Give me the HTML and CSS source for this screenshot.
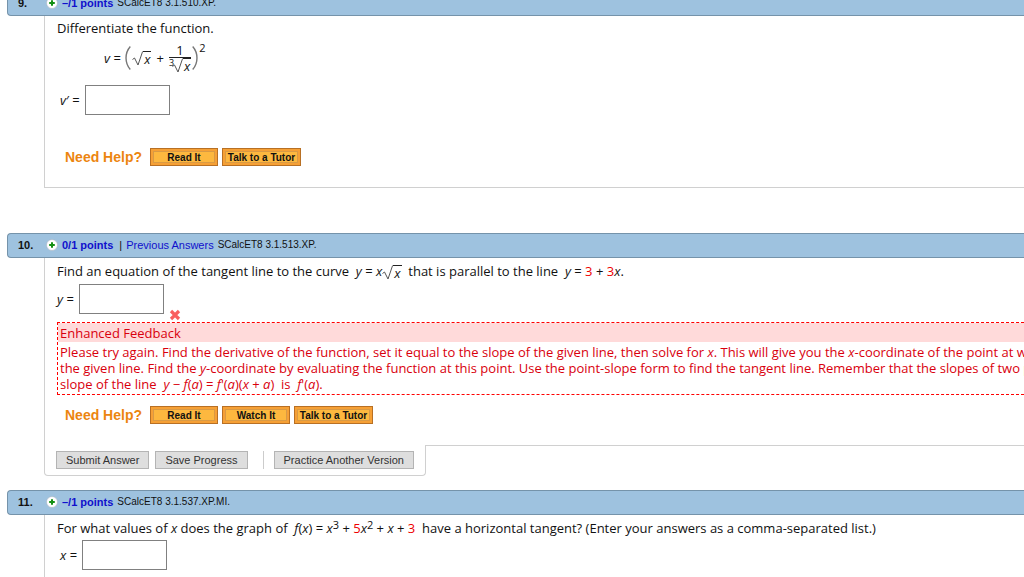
FILE: index.html
```html
<!DOCTYPE html>
<html lang="en">

<head>
    <meta charset="UTF-8">
    <meta name="viewport" content="width=device-width, initial-scale=1.0">
    <title>Homework 3.1</title>
    <link rel="stylesheet" href="styles.css">
</head>

<body>
    <main class="assignment">

        <section class="question first">
            <div class="bar">
                <span class="number">9.</span>
                <svg class="plus" viewBox="0 0 12 12"><circle cx="6" cy="6" r="5.5" fill="#fff" stroke="#a9b6c2" stroke-width="0.6"/><path d="M6 3.2v5.6M3.2 6h5.6" stroke="#149014" stroke-width="2"/></svg>
                <a href="#" class="points">–/1 points</a>
                <span class="source">SCalcET8 3.1.510.XP.</span>
            </div>
            <div class="content">
                <p>Differentiate the function.</p>
                <div class="equation">
                    <i>v</i>&nbsp;=&nbsp;
                    <svg class="paren" viewBox="0 0 6 24"><path d="M5.3 0.5C-0.4 7-0.4 17 5.3 23.5" fill="none" stroke="#777" stroke-width="1.4"/></svg>
                    <span class="root"><svg class="radical" viewBox="0 0 11 15"><path d="M0.5 8.5l2-1.5L6 14 10.6 0.5" fill="none" stroke="#555"/></svg><i>x</i></span>
                    <span class="op">+</span>
                    <span class="fraction">
                        <span class="top">1</span>
                        <span class="root cube"><small>3</small><svg class="radical" viewBox="0 0 11 15"><path d="M0.5 8.5l2-1.5L6 14 10.6 0.5" fill="none" stroke="#555"/></svg><i>x</i></span>
                    </span>
                    <svg class="paren" viewBox="0 0 6 24"><path d="M0.7 0.5C6.4 7 6.4 17 0.7 23.5" fill="none" stroke="#777" stroke-width="1.4"/></svg>
                    <span class="power">2</span>
                </div>
                <div class="answer indent">
                    <label for="q9"><i>v</i>′ =</label>
                    <input type="text" id="q9">
                </div>
                <div class="help">
                    <span class="help-title">Need Help?</span>
                    <button class="help-btn">Read It</button>
                    <button class="help-btn wide">Talk to a Tutor</button>
                </div>
            </div>
        </section>

        <section class="question">
            <div class="bar">
                <span class="number">10.</span>
                <svg class="plus" viewBox="0 0 12 12"><circle cx="6" cy="6" r="5.5" fill="#fff" stroke="#a9b6c2" stroke-width="0.6"/><path d="M6 3.2v5.6M3.2 6h5.6" stroke="#149014" stroke-width="2"/></svg>
                <a href="#" class="points">0/1 points</a>
                <span class="divider">|</span>
                <a href="#" class="previous">Previous Answers</a>
                <span class="source">SCalcET8 3.1.513.XP.</span>
            </div>
            <div class="content">
                <p>Find an equation of the tangent line to the curve &nbsp;<i>y</i> = <i>x</i><span class="root"><svg class="radical" viewBox="0 0 11 15"><path d="M0.5 8.5l2-1.5L6 14 10.6 0.5" fill="none" stroke="#555"/></svg><i>x</i></span>&nbsp; that is parallel to the line &nbsp;<i>y</i> = <b>3</b> + <b>3</b><i>x</i>.</p>
                <div class="answer">
                    <label for="q10"><i>y</i> =</label>
                    <input type="text" id="q10">
                    <svg class="wrong" viewBox="0 0 12 12"><path d="M2 2l8 8M10 2l-8 8" stroke="#f95f5f" stroke-width="3.2"/></svg>
                </div>
                <div class="feedback">
                    <div class="feedback-title">Enhanced Feedback</div>
                    <div class="feedback-text">
                        Please try again. Find the derivative of the function, set it equal to the slope of the given line, then solve for <i>x</i>. This will give you the <i>x</i>-coordinate of the point at which<br>
                        the given line. Find the <i>y</i>-coordinate by evaluating the function at this point. Use the point-slope form to find the tangent line. Remember that the slopes of two parallel<br>
                        slope of the line &nbsp;<i>y</i> − <i>f</i>(<i>a</i>) = <i>f</i>'(<i>a</i>)(<i>x</i> + <i>a</i>)&nbsp; is &nbsp;<i>f</i>'(<i>a</i>).
                    </div>
                </div>
                <div class="help">
                    <span class="help-title">Need Help?</span>
                    <button class="help-btn">Read It</button>
                    <button class="help-btn">Watch It</button>
                    <button class="help-btn wide">Talk to a Tutor</button>
                </div>
            </div>
            <div class="actions">
                <div class="tab">
                    <button>Submit Answer</button>
                    <button>Save Progress</button>
                    <span class="separator"></span>
                    <button>Practice Another Version</button>
                </div>
                <div class="edge"></div>
            </div>
        </section>

        <section class="question last">
            <div class="bar">
                <span class="number">11.</span>
                <svg class="plus" viewBox="0 0 12 12"><circle cx="6" cy="6" r="5.5" fill="#fff" stroke="#a9b6c2" stroke-width="0.6"/><path d="M6 3.2v5.6M3.2 6h5.6" stroke="#149014" stroke-width="2"/></svg>
                <a href="#" class="points">–/1 points</a>
                <span class="source">SCalcET8 3.1.537.XP.MI.</span>
            </div>
            <div class="content">
                <p>For what values of <i>x</i> does the graph of &nbsp;<i>f</i>(<i>x</i>) = <i>x</i><sup>3</sup> + <b>5</b><i>x</i><sup>2</sup> + <i>x</i> + <b>3</b>&nbsp; have a horizontal tangent? (Enter your answers as a comma-separated list.)</p>
                <div class="answer indent">
                    <label for="q11"><i>x</i> =</label>
                    <input type="text" id="q11">
                </div>
            </div>
        </section>

    </main>
</body>

</html>
```
FILE: styles.css
```css
* {
    box-sizing: border-box;
    margin: 0;
    padding: 0;
}

body {
    background-color: #fff;
    color: #111;
    font-family: "Open Sans", Verdana, sans-serif;
    font-size: 13px;
    line-height: 16px;
    overflow: hidden;
}

a {
    color: #1010cc;
    text-decoration: none;
}

.assignment {
    padding-left: 7px;
    overflow: hidden;
    white-space: nowrap;
}

.question.first {
    margin-top: -9px;
    margin-bottom: 45px;
}

/* blue title bar */
.bar {
    display: flex;
    align-items: center;
    height: 25px;
    padding: 0 0 2px 10px;
    background-color: #9ec2df;
    border: 1px solid #7593aa;
    border-right: none;
    border-radius: 4px 0 0 4px;
    font-family: Arial, "Liberation Sans", sans-serif;
    font-size: 11px;
}

.number {
    width: 28px;
    font-weight: bold;
}

.plus {
    width: 12px;
    height: 12px;
    margin-right: 4px;
}

.points {
    font-weight: bold;
}

.divider {
    margin: 0 4px 0 6px;
}

.source {
    margin-left: 4px;
    font-size: 10px;
}

.content {
    margin-left: 37px;
    padding: 5px 0 21px 12px;
    border-left: 1px solid #d0d0d0;
}

.first .content {
    padding-top: 4px;
    border-bottom: 1px solid #d0d0d0;
}

.last .content {
    padding-bottom: 8px;
}

.content b {
    color: #e00;
    font-weight: normal;
}

sup {
    font-size: 11px;
    line-height: 0;
    vertical-align: 4px;
}

/* formulas */
.equation {
    display: flex;
    align-items: center;
    height: 36px;
    margin: 4px 0 9px 47px;
}

.paren {
    width: 6px;
    height: 24px;
    margin: 0 1px;
}

.root {
    display: inline-flex;
    line-height: 15px;
    vertical-align: middle;
}

.root i {
    height: 15px;
    padding: 0 1px;
    border-top: 1px solid #222;
}

.radical {
    width: 11px;
    height: 15px;
}

.op {
    margin: 0 5px;
}

.fraction {
    display: flex;
    flex-direction: column;
    align-items: center;
}

.fraction .top {
    width: 100%;
    line-height: 14px;
    text-align: center;
    border-bottom: 1px solid #222;
}

.cube small {
    margin-right: -2px;
    font-size: 9px;
    line-height: 9px;
}

.power {
    align-self: flex-start;
    font-size: 11px;
}

.answer {
    display: flex;
    align-items: center;
    gap: 5px;
    margin-top: 4px;
}

.answer.indent {
    padding-left: 3px;
}

.answer input {
    width: 85px;
    height: 30px;
    border: 1px solid #808080;
    background-color: #fff;
}

.wrong {
    align-self: flex-end;
    width: 12px;
    height: 12px;
    margin-bottom: -7px;
}

.feedback {
    margin-top: 8px;
    color: #d9000d;
    border: 1px dashed #f00;
    border-right: none;
}

.feedback-title {
    padding: 2px 2px 1px;
    background-color: #ffdada;
}

.feedback-text {
    padding: 2px;
}

.help {
    display: flex;
    align-items: center;
    gap: 4px;
    margin: 11px 0 0 8px;
    font-family: Arial, "Liberation Sans", sans-serif;
}

.first .help {
    margin-top: 33px;
}

.help-title {
    width: 81px;
    color: #ec850f;
    font-size: 14px;
    font-weight: bold;
}

.help-btn {
    width: 68px;
    height: 18px;
    border: 1px solid #b87024;
    background-color: #fdb83f;
    box-shadow: inset 0 0 0 2px #f6a035, inset 0 0 0 3px #d99a45;
    color: #111;
    font: bold 10px Arial, "Liberation Sans", sans-serif;
}

.help-btn.wide {
    width: 79px;
}

/* submit row, the outline steps up after the tab */
.actions {
    display: flex;
    margin-left: 37px;
    margin-bottom: 14px;
}

.tab {
    display: flex;
    gap: 6px;
    padding: 6px 11px;
    border: 1px solid #d0d0d0;
    border-top: none;
    border-radius: 0 0 4px 4px;
}

.tab button {
    height: 18px;
    padding: 0 9px;
    border: 1px solid #b4b4b4;
    background-color: #dedede;
    color: #333;
    font: 11px Arial, "Liberation Sans", sans-serif;
}

.separator {
    margin: 0 4px 0 9px;
    border-left: 1px solid #ccc;
}

.edge {
    flex: 1;
    border-top: 1px solid #d0d0d0;
}
```
